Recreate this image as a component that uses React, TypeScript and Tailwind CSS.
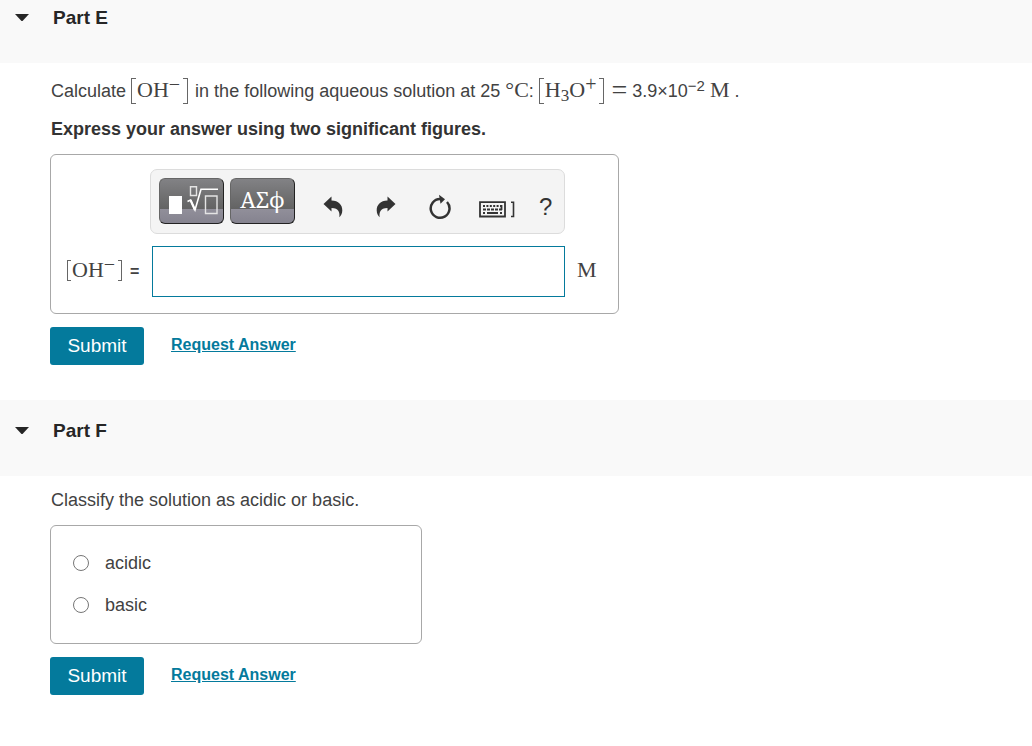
import type { ReactNode } from "react";

const serif = "font-['Liberation_Serif',serif] text-[22px] leading-none";
const raised = "align-[6px] text-[20px] leading-none";

function PartHeader({ title, first = false }: { title: string; first?: boolean }) {
  return (
    <header className={`bg-[#f9f9f9] pb-[33px] ${first ? "pt-[6px]" : "pt-[19px]"}`}>
      <button type="button" className="flex items-center text-[#262626]">
        <svg className="ml-[15px] h-[8px] w-[14px]" viewBox="0 0 14 8" aria-hidden="true">
          <path d="M0 0H14L8 6.6Q7 7.6 6 6.6Z" fill="currentColor" />
        </svg>
        <h2 className="ml-6 text-[19px] leading-6 font-bold">{title}</h2>
      </button>
    </header>
  );
}

function Bracket({ side, small = false }: { side: "left" | "right"; small?: boolean }) {
  return (
    <span
      className={`inline-block border-y border-[#666] ${
        small ? "h-[21px] w-[4px] align-[-4px]" : "h-[26px] w-[5px] align-[-7px]"
      } ${side === "left" ? "mr-px border-l" : "mr-[2px] ml-[3px] border-r"}`}
      aria-hidden="true"
    />
  );
}

function Hydroxide({ small = false }: { small?: boolean }) {
  return (
    <span className={`${serif} whitespace-nowrap`}>
      <Bracket side="left" small={small} />
      OH
      <span className={raised}>−</span>
      <Bracket side="right" small={small} />
    </span>
  );
}

function Actions() {
  return (
    <div className="mt-[13px] flex items-center">
      <button type="button" className="h-[38px] w-[94px] rounded-[3px] bg-[#047a9c] text-[19px] text-white">
        Submit
      </button>
      <a href="#answer" className="ml-[27px] pb-[3px] text-[16px] leading-6 font-bold text-[#047a9c] underline">
        Request Answer
      </a>
    </div>
  );
}

function PaletteButton({ label, children }: { label: string; children: ReactNode }) {
  return (
    <button
      type="button"
      aria-label={label}
      className="flex h-[46px] w-[65px] items-center justify-center rounded-[6px] border border-t-[#666] border-l-[#666] border-r-[#222] border-b-[#222] bg-[linear-gradient(#828285_0%,#636363_68%,#918f9a_68%,#85838f_100%)] text-white"
    >
      {children}
    </button>
  );
}

function Toolbar() {
  return (
    <div className="flex h-[65px] items-start gap-[6px] rounded-[7px] border border-[#dcdcdc] bg-[#f4f4f4] pt-2 pl-2 text-[#333]">
      <PaletteButton label="Templates">
        <svg className="h-[30px] w-[55px]" viewBox="-4 0 55 30" fill="none" aria-hidden="true">
          <path d="M1 10H14V28H1Z" fill="#fff" />
          <path d="M22.5 .7H28.5V9.5H22.5Z" stroke="#e4e4e4" strokeWidth="1.4" />
          <path d="M19.5 15.5L22.5 14L27 24L33 3.2H50" stroke="#fff" strokeWidth="1.6" />
          <path d="M22.5 14L27 24" stroke="#fff" strokeWidth="2.2" />
          <path d="M37.5 10H49V27.5H37.5Z" stroke="#e4e4e4" strokeWidth="1.4" />
        </svg>
      </PaletteButton>
      <PaletteButton label="Symbols">
        <span className="pb-1 font-['Noto_Serif','Liberation_Serif',serif] text-[22px] leading-none">ΑΣϕ</span>
      </PaletteButton>
      <div className="mt-[14px] grid flex-1 grid-cols-[53px_52px_51px_54px_auto] items-center pl-[22px]">
        <button type="button" aria-label="Undo">
          <svg className="h-[22px] w-5" viewBox="0 0 20 22" fill="currentColor" aria-hidden="true">
            <path d="M.5 8L8.5 .5V4.5C15.5 4.5 19.5 9 19.3 14.5C19.2 17.5 18 20 16.3 21.3C17 17 16 12 8.5 12V15.5Z" />
          </svg>
        </button>
        <button type="button" aria-label="Redo">
          <svg className="h-[22px] w-5" viewBox="0 0 20 22" fill="currentColor" aria-hidden="true">
            <path d="M19.5 8L11.5 .5V4.5C4.5 4.5 .5 9 .7 14.5C.8 17.5 2 20 3.7 21.3C3 17 4 12 11.5 12V15.5Z" />
          </svg>
        </button>
        <button type="button" aria-label="Reset">
          <svg className="h-[26px] w-[24px]" viewBox="0 0 24 26" fill="none" aria-hidden="true">
            <path d="M12 5A9.4 9.4 0 1 0 19 8" stroke="currentColor" strokeWidth="2.5" />
            <path d="M11 .8L17 5.3L12.5 9.8Z" fill="currentColor" />
          </svg>
        </button>
        <button type="button" aria-label="Keyboard shortcuts">
          <svg className="mt-[5px] h-[17px] w-9" viewBox="0 0 36 17" fill="none" aria-hidden="true">
            <path d="M1 1.2H26V15.5H1Z" stroke="currentColor" strokeWidth="1.8" />
            <path d="M4 5H23" stroke="currentColor" strokeWidth="2" strokeDasharray="2 1.4" />
            <path d="M4 8.5H23" stroke="currentColor" strokeWidth="2" strokeDasharray="3 1" />
            <path d="M4 12H6M8 12H19M21 12H23M22.5 4V9" stroke="currentColor" strokeWidth="1.8" />
            <path d="M32 1.2H34.5V15.5H32" stroke="currentColor" strokeWidth="1.6" />
          </svg>
        </button>
        <button type="button" aria-label="Help" className="justify-self-start pl-[6px] text-[24px] leading-[30px]">
          ?
        </button>
      </div>
    </div>
  );
}

export default function App() {
  return (
    <main className="bg-white pb-12 font-['Liberation_Sans',Arial,sans-serif] text-[18px] text-[#424242]">
      <section>
        <PartHeader title="Part E" first />
        <div className="px-[50px] pt-[11px]">
          <p className="pl-px leading-8">
            Calculate <Hydroxide /> in the following aqueous solution at 25{" "}
            <span className={serif}>°C</span>:{" "}
            <span className={`${serif} whitespace-nowrap`}>
              <Bracket side="left" />H<span className="align-[-4px] text-[17px] leading-none">3</span>O
              <span className={raised}>+</span>
              <Bracket side="right" />
            </span>{" "}
            <span className="align-[-2px] font-['Liberation_Serif',serif] text-[28px] leading-none">=</span> 3.9×10
            <span className="align-[6px] text-[15px] leading-none">−2</span> <span className={serif}>M</span> .
          </p>
          <p className="mt-[10px] pl-px leading-6 font-bold text-[#333]">
            Express your answer using two significant figures.
          </p>
          <div className="mt-[13px] grid w-fit grid-cols-[99px_415px_53px] rounded-[6px] border border-[#a8a8a8] pt-[14px] pb-4">
            <div className="col-start-2">
              <Toolbar />
            </div>
            <label htmlFor="concentration" className="col-start-1 mt-3 flex items-center pl-4">
              <span className="pb-[4px]">
                <Hydroxide small />
              </span>
              <span className="ml-[6px] text-[16px] font-bold">=</span>
            </label>
            <input
              id="concentration"
              type="text"
              className="mt-3 ml-[2px] h-[51px] border border-[#047a9c] bg-white px-3 outline-none"
            />
            <span className={`${serif} mt-2 self-center pl-3`}>M</span>
          </div>
          <Actions />
        </div>
      </section>

      <section className="mt-[35px]">
        <PartHeader title="Part F" />
        <div className="px-[50px] pt-[12px]">
          <p className="pl-px leading-6">Classify the solution as acidic or basic.</p>
          <fieldset
            aria-label="Classification"
            className="mt-[13px] flex w-full max-w-[372px] flex-col gap-[18px] rounded-[6px] border border-[#a8a8a8] pt-[25px] pb-[26px] pl-[22px]"
          >
            {["acidic", "basic"].map((name) => (
              <label key={name} className="flex items-center leading-6">
                <input
                  type="radio"
                  name="classification"
                  value={name}
                  className="h-4 w-4 appearance-none rounded-full border border-[#767676] bg-white checked:border-4 checked:border-[#047a9c]"
                />
                <span className="ml-4">{name}</span>
              </label>
            ))}
          </fieldset>
          <Actions />
        </div>
      </section>
    </main>
  );
}
